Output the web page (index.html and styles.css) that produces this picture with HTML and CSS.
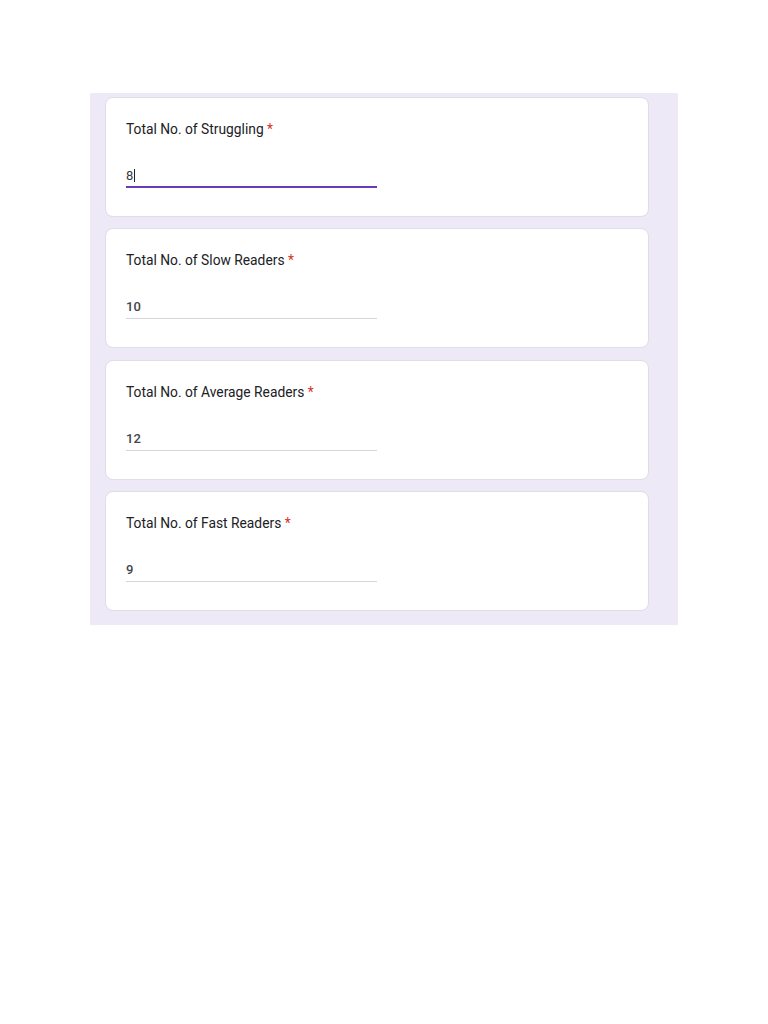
FILE: index.html
```html
<!DOCTYPE html>
<html>
<head>
<meta charset="utf-8">
<link rel="stylesheet" href="styles.css">
</head>
<body>
<div class="panel">
  <div class="card">
    <div class="label">Total No. of Struggling <span class="req">*</span></div>
    <div class="field active"><span class="val">8</span><span class="caret"></span></div>
  </div>
  <div class="card">
    <div class="label">Total No. of Slow Readers <span class="req">*</span></div>
    <div class="field"><span class="val">10</span></div>
  </div>
  <div class="card">
    <div class="label">Total No. of Average Readers <span class="req">*</span></div>
    <div class="field"><span class="val">12</span></div>
  </div>
  <div class="card">
    <div class="label">Total No. of Fast Readers <span class="req">*</span></div>
    <div class="field"><span class="val">9</span></div>
  </div>
</div>
</body>
</html>
```
FILE: styles.css
```css
html, body {
  margin: 0;
  background: #ffffff;
}
body {
  font-family: Roboto, "Liberation Sans", sans-serif;
  padding-top: 93px;
}
.panel {
  margin-left: 90px;
  width: 588px;
  height: 532px;
  box-sizing: border-box;
  background: #ede9f7;
  padding: 4px 29px 14px 15px;
  display: flex;
  flex-direction: column;
  gap: 11.5px;
}
.card {
  background: #ffffff;
  border: 1px solid #dfdde6;
  border-radius: 8px;
  height: 120px;
  box-sizing: border-box;
  padding: 21px 20px 0 20px;
}
.label {
  font-size: 13.8px;
  line-height: 20px;
  color: #202124;
}
.req {
  color: #d93025;
}
.field {
  margin-top: 19px;
  width: 251px;
  height: 30px;
  box-sizing: border-box;
  border-bottom: 1px solid #d6d6d9;
  display: flex;
  align-items: center;
  font-size: 13px;
  color: #202124;
  padding-top: 6px;
}
.val {
  font-weight: 500;
  color: #45454a;
}
.field.active {
  border-bottom: 2px solid #673ab7;
}
.field.active .val {
  font-weight: 400;
  color: #3c3c40;
}
.caret {
  display: inline-block;
  width: 1px;
  height: 13px;
  background: #202124;
  margin-left: 1px;
}
```
